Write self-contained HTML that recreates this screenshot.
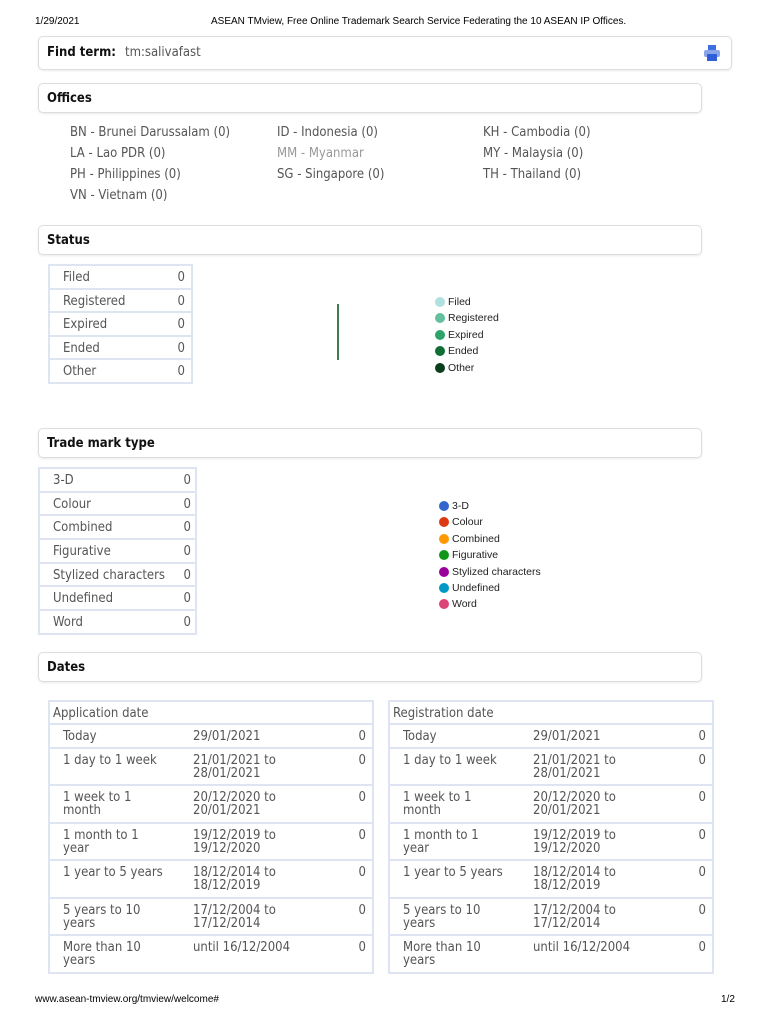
<!DOCTYPE html>
<html><head><meta charset="utf-8"><style>
*{margin:0;padding:0;box-sizing:border-box}
body{width:768px;height:1024px;background:#fff;position:relative;font-family:"DejaVu Sans Condensed","DejaVu Sans","Liberation Sans",sans-serif;font-size:13px;color:#555;overflow:hidden}
.a{position:absolute;white-space:nowrap}
.hd{font-family:"Liberation Sans",sans-serif;font-size:10px;color:#000}
.box{position:absolute;left:38px;width:664px;height:30px;border:1px solid #ddd;border-radius:5px;box-shadow:0 1px 2px rgba(0,0,0,.08)}
.box b{position:absolute;left:8px;top:7px;font-size:13px;color:#111}
table{position:absolute;border-collapse:collapse;border:2px solid #dfe4f2}
td{border-bottom:2px solid #dfe4f2;padding:0;vertical-align:top;color:#555;line-height:13px;white-space:nowrap}
.leg{position:absolute;font-family:"Liberation Sans",sans-serif;font-size:10.5px;color:#222}
.leg div{height:16.4px;position:relative;padding-left:13px;line-height:14px}
.leg i{position:absolute;left:0;top:2px;width:10px;height:10px;border-radius:50%}
</style></head><body>
<div class="a hd" style="left:35px;top:16px">1/29/2021</div>
<div class="a hd" style="left:211px;top:16px">ASEAN TMview, Free Online Trademark Search Service Federating the 10 ASEAN IP Offices.</div>
<div class="box" style="top:36px;width:694px;height:34px"><b style="top:8px">Find term:</b><span class="a" style="left:86px;top:8px">tm:salivafast</span>
<svg class="a" style="left:664px;top:7px" width="18" height="18" viewBox="0 0 18 18"><rect x="5" y="1" width="8" height="5" fill="#3d6fe0"/><rect x="1" y="6" width="16" height="7" rx="2" fill="#8aa6e8"/><rect x="4" y="10" width="10" height="7" fill="#2f5fd8"/></svg></div>
<div class="box" style="top:83px"><b>Offices</b></div>
<div class="a" style="left:70px;top:125px">BN - Brunei Darussalam (0)</div>
<div class="a" style="left:277px;top:125px">ID - Indonesia (0)</div>
<div class="a" style="left:483px;top:125px">KH - Cambodia (0)</div>
<div class="a" style="left:70px;top:146px">LA - Lao PDR (0)</div>
<div class="a" style="left:277px;top:146px;color:#999">MM - Myanmar</div>
<div class="a" style="left:483px;top:146px">MY - Malaysia (0)</div>
<div class="a" style="left:70px;top:167px">PH - Philippines (0)</div>
<div class="a" style="left:277px;top:167px">SG - Singapore (0)</div>
<div class="a" style="left:483px;top:167px">TH - Thailand (0)</div>
<div class="a" style="left:70px;top:188px">VN - Vietnam (0)</div>

<div class="box" style="top:225px"><b>Status</b></div>
<table style="left:48px;top:264px;width:145px">
<tr style="height:23.5px"><td style="padding:5px 0 0 13px">Filed</td><td style="padding:5px 6px 0 0;text-align:right">0</td></tr>
<tr style="height:23.5px"><td style="padding:5px 0 0 13px">Registered</td><td style="padding:5px 6px 0 0;text-align:right">0</td></tr>
<tr style="height:23.5px"><td style="padding:5px 0 0 13px">Expired</td><td style="padding:5px 6px 0 0;text-align:right">0</td></tr>
<tr style="height:23.5px"><td style="padding:5px 0 0 13px">Ended</td><td style="padding:5px 6px 0 0;text-align:right">0</td></tr>
<tr style="height:23.5px"><td style="padding:5px 0 0 13px">Other</td><td style="padding:5px 6px 0 0;text-align:right">0</td></tr>
</table>
<div class="a" style="left:337px;top:304px;width:2px;height:56px;background:#3e7a4e"></div>
<div class="leg" style="left:435px;top:295px">
<div><i style="background:#b0e0e0"></i>Filed</div><div><i style="background:#66c0a0"></i>Registered</div><div><i style="background:#2ea36a"></i>Expired</div><div><i style="background:#0f6e35"></i>Ended</div><div><i style="background:#0a3d1c"></i>Other</div></div>

<div class="box" style="top:428px"><b>Trade mark type</b></div>
<table style="left:38px;top:467px;width:159px">
<tr style="height:23.7px"><td style="padding:5px 0 0 13px">3-D</td><td style="padding:5px 4px 0 0;text-align:right">0</td></tr>
<tr style="height:23.7px"><td style="padding:5px 0 0 13px">Colour</td><td style="padding:5px 4px 0 0;text-align:right">0</td></tr>
<tr style="height:23.7px"><td style="padding:5px 0 0 13px">Combined</td><td style="padding:5px 4px 0 0;text-align:right">0</td></tr>
<tr style="height:23.7px"><td style="padding:5px 0 0 13px">Figurative</td><td style="padding:5px 4px 0 0;text-align:right">0</td></tr>
<tr style="height:23.7px"><td style="padding:5px 0 0 13px">Stylized characters</td><td style="padding:5px 4px 0 0;text-align:right">0</td></tr>
<tr style="height:23.7px"><td style="padding:5px 0 0 13px">Undefined</td><td style="padding:5px 4px 0 0;text-align:right">0</td></tr>
<tr style="height:23.7px"><td style="padding:5px 0 0 13px">Word</td><td style="padding:5px 4px 0 0;text-align:right">0</td></tr>
</table>
<div class="leg" style="left:439px;top:499px">
<div><i style="background:#3366cc"></i>3-D</div><div><i style="background:#dc3912"></i>Colour</div><div><i style="background:#ff9900"></i>Combined</div><div><i style="background:#109618"></i>Figurative</div><div><i style="background:#990099"></i>Stylized characters</div><div><i style="background:#0099c6"></i>Undefined</div><div><i style="background:#dd4477"></i>Word</div></div>

<div class="box" style="top:652px"><b>Dates</b></div>

<table style="left:48px;top:700px;width:326px">
<tr style="height:23px"><td colspan="3" style="padding:5px 0 0 3px">Application date</td></tr>
<tr style="height:24px"><td style="padding:5px 0 0 13px;width:144px">Today</td><td style="padding-top:5px">29/01/2021</td><td style="padding:5px 6px 0 0;text-align:right">0</td></tr>
<tr style="height:37px"><td style="padding:5px 0 0 13px">1 day to 1 week</td><td style="padding-top:5px">21/01/2021 to<br>28/01/2021</td><td style="padding:5px 6px 0 0;text-align:right">0</td></tr>
<tr style="height:38px"><td style="padding:5px 0 0 13px">1 week to 1<br>month</td><td style="padding-top:5px">20/12/2020 to<br>20/01/2021</td><td style="padding:5px 6px 0 0;text-align:right">0</td></tr>
<tr style="height:37px"><td style="padding:5px 0 0 13px">1 month to 1<br>year</td><td style="padding-top:5px">19/12/2019 to<br>19/12/2020</td><td style="padding:5px 6px 0 0;text-align:right">0</td></tr>
<tr style="height:38px"><td style="padding:5px 0 0 13px">1 year to 5 years</td><td style="padding-top:5px">18/12/2014 to<br>18/12/2019</td><td style="padding:5px 6px 0 0;text-align:right">0</td></tr>
<tr style="height:37px"><td style="padding:5px 0 0 13px">5 years to 10<br>years</td><td style="padding-top:5px">17/12/2004 to<br>17/12/2014</td><td style="padding:5px 6px 0 0;text-align:right">0</td></tr>
<tr style="height:38px"><td style="padding:5px 0 0 13px">More than 10<br>years</td><td style="padding-top:5px">until 16/12/2004</td><td style="padding:5px 6px 0 0;text-align:right">0</td></tr>
</table>
<table style="left:388px;top:700px;width:326px">
<tr style="height:23px"><td colspan="3" style="padding:5px 0 0 3px">Registration date</td></tr>
<tr style="height:24px"><td style="padding:5px 0 0 13px;width:144px">Today</td><td style="padding-top:5px">29/01/2021</td><td style="padding:5px 6px 0 0;text-align:right">0</td></tr>
<tr style="height:37px"><td style="padding:5px 0 0 13px">1 day to 1 week</td><td style="padding-top:5px">21/01/2021 to<br>28/01/2021</td><td style="padding:5px 6px 0 0;text-align:right">0</td></tr>
<tr style="height:38px"><td style="padding:5px 0 0 13px">1 week to 1<br>month</td><td style="padding-top:5px">20/12/2020 to<br>20/01/2021</td><td style="padding:5px 6px 0 0;text-align:right">0</td></tr>
<tr style="height:37px"><td style="padding:5px 0 0 13px">1 month to 1<br>year</td><td style="padding-top:5px">19/12/2019 to<br>19/12/2020</td><td style="padding:5px 6px 0 0;text-align:right">0</td></tr>
<tr style="height:38px"><td style="padding:5px 0 0 13px">1 year to 5 years</td><td style="padding-top:5px">18/12/2014 to<br>18/12/2019</td><td style="padding:5px 6px 0 0;text-align:right">0</td></tr>
<tr style="height:37px"><td style="padding:5px 0 0 13px">5 years to 10<br>years</td><td style="padding-top:5px">17/12/2004 to<br>17/12/2014</td><td style="padding:5px 6px 0 0;text-align:right">0</td></tr>
<tr style="height:38px"><td style="padding:5px 0 0 13px">More than 10<br>years</td><td style="padding-top:5px">until 16/12/2004</td><td style="padding:5px 6px 0 0;text-align:right">0</td></tr>
</table>
<div class="a hd" style="left:35px;top:994px">www.asean-tmview.org/tmview/welcome#</div>
<div class="a hd" style="left:721px;top:994px">1/2</div>
</body></html>
